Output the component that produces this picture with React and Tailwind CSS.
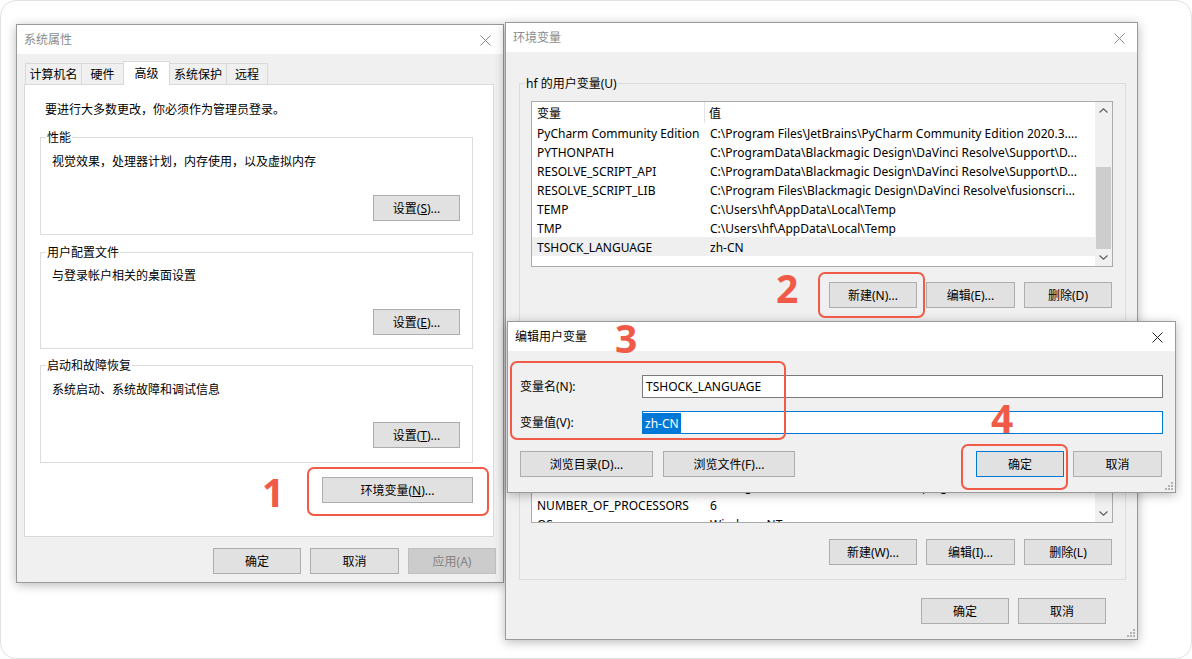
import clsx from 'clsx';

const userRows = [
  ['PyCharm Community Edition', 'C:\\Program Files\\JetBrains\\PyCharm Community Edition 2020.3....'],
  ['PYTHONPATH', 'C:\\ProgramData\\Blackmagic Design\\DaVinci Resolve\\Support\\D...'],
  ['RESOLVE_SCRIPT_API', 'C:\\ProgramData\\Blackmagic Design\\DaVinci Resolve\\Support\\D...'],
  ['RESOLVE_SCRIPT_LIB', 'C:\\Program Files\\Blackmagic Design\\DaVinci Resolve\\fusionscri...'],
  ['TEMP', 'C:\\Users\\hf\\AppData\\Local\\Temp'],
  ['TMP', 'C:\\Users\\hf\\AppData\\Local\\Temp'],
  ['TSHOCK_LANGUAGE', 'zh-CN'],
];

const sysRows = [
  ['ComSpec', 'C:\\Windows\\system32\\cmd.exe'],
  ['DriverData', 'C:\\Windows\\System32\\Drivers\\DriverData'],
  ['JAVA_HOME', 'C:\\Program Files\\Java\\jdk1.8.0_271'],
  ['NVM_HOME', 'C:\\Users\\hf\\AppData\\Roaming\\nvm'],
  ['NVM_SYMLINK', 'C:\\Program Files\\nodejs'],
  ['MOZ_PLUGIN_PATH', 'C:\\Program Files (x86)\\Foxit Software\\plugins\\'],
  ['NUMBER_OF_PROCESSORS', '6'],
  ['OS', 'Windows_NT'],
  ['Path', 'C:\\Windows\\system32;C:\\Windows;C:\\Windows\\System32\\Wbem'],
];

const tabs = [
  { label: '计算机名', w: 'w-[57px]' },
  { label: '硬件', w: 'w-[43px] -ml-px' },
  { label: '高级', w: 'w-[47px] -ml-px', active: true },
  { label: '系统保护', w: 'w-[58px] -ml-px' },
  { label: '远程', w: 'w-[42px] -ml-px' },
];

function Btn({ className, disabled, focus, children }) {
  return (
    <button
      type="button"
      className={clsx(
        'flex h-[26px] shrink-0 items-center justify-center border pt-px text-[12px] leading-none',
        disabled
          ? 'border-[#bfbfbf] bg-[#cccccc] text-[#838383]'
          : focus
            ? 'border-[#0078d7] bg-[#e1e1e1] text-black'
            : 'border-[#adadad] bg-[#e1e1e1] text-black',
        className
      )}
    >
      {children}
    </button>
  );
}

function CloseX({ dark }) {
  return (
    <svg width="11" height="11" viewBox="0 0 11 11" className="shrink-0">
      <path d="M0.5 0.5L10.5 10.5M10.5 0.5L0.5 10.5" stroke={dark ? '#222222' : '#8a8a8a'} strokeWidth="1" fill="none" />
    </svg>
  );
}

function Chevron({ up }) {
  return (
    <svg width="9" height="5" viewBox="0 0 9 5">
      <path d={up ? 'M0.5 4.5L4.5 0.8L8.5 4.5' : 'M0.5 0.5L4.5 4.2L8.5 0.5'} stroke="#606060" strokeWidth="1.2" fill="none" />
    </svg>
  );
}

function Grip({ className }) {
  const dots = [[6, 0], [6, 3], [3, 3], [6, 6], [3, 6], [0, 6]];
  return (
    <svg className={clsx('absolute', className)} width="8" height="8" viewBox="0 0 8 8">
      {dots.map(([x, y]) => (
        <rect key={x + '-' + y} x={x} y={y} width="2" height="2" fill="#b4b4b4" />
      ))}
    </svg>
  );
}

function Win({ className, title, active, children }) {
  return (
    <div
      className={clsx(
        'absolute flex flex-col border border-[#9a9a9a] bg-[#f0f0f0] shadow-[0_2px_10px_rgba(0,0,0,0.28)]',
        className
      )}
    >
      <div className="flex h-[29px] shrink-0 items-center justify-between bg-white pl-[7px] pr-[12px] pt-px">
        <span className={active ? 'text-black' : 'text-[#8c8c8c]'}>{title}</span>
        <CloseX dark={active} />
      </div>
      {children}
    </div>
  );
}

function Group({ label, labelBg, className, children }) {
  return (
    <div className={clsx('relative flex flex-col border border-[#dcdcdc]', className)}>
      <span className={clsx('absolute -top-[8px] left-[5px] px-[1px] leading-[16px]', labelBg)}>{label}</span>
      {children}
    </div>
  );
}

function ListView({ rows, selected, className, thumbClass }) {
  return (
    <div className={clsx('flex shrink-0 overflow-hidden border border-[#ababab] bg-white', className)}>
      <div className="flex min-w-0 flex-1 flex-col">
        <div className="flex h-[21px] shrink-0">
          <div className="flex w-[173px] items-center border-r border-[#e5e5e5] pl-[5px] pt-[2px]">变量</div>
          <div className="flex items-center pl-[4px] pt-[2px]">值</div>
        </div>
        {rows.map(([k, v], i) => (
          <div
            key={k}
            className={clsx(
              'flex h-[19px] shrink-0 items-center whitespace-nowrap pt-[2px]',
              i === selected && 'bg-[#efefef]'
            )}
          >
            <div className="w-[173px] shrink-0 overflow-hidden pl-[5px]">{k}</div>
            <div className="min-w-0 flex-1 overflow-hidden pl-[5px]">{v}</div>
          </div>
        ))}
      </div>
      <div className="flex w-[17px] shrink-0 flex-col bg-[#f0f0f0]">
        <div className="flex h-[17px] shrink-0 items-center justify-center">
          <Chevron up />
        </div>
        <div className="min-h-0 flex-1">
          <div className={clsx('mx-[1px] bg-[#cdcdcd]', thumbClass)} />
        </div>
        <div className="flex h-[17px] shrink-0 items-center justify-center">
          <Chevron />
        </div>
      </div>
    </div>
  );
}

function Num({ className, children }) {
  return (
    <span className={clsx('absolute text-[39px] font-bold leading-none text-[#f05a47]', className)}>{children}</span>
  );
}

function Mark({ className }) {
  return <div className={clsx('absolute rounded-[7px] border-2 border-[#f05a47]', className)} />;
}

export default function App() {
  return (
    <div className="relative h-[659px] w-[1192px] overflow-hidden bg-white text-[12px] leading-[16px] text-black [font-family:'Noto_Sans','Noto_Sans_CJK_SC',sans-serif]">
      <div className="absolute inset-0 rounded-[16px] border border-[#e2e2e2]" />

      {/* 系统属性 */}
      <Win title="系统属性" className="left-[16px] top-[24px] h-[559px] w-[488px]">
        <div className="flex flex-1 flex-col px-[7px] pt-[7px]">
          <div className="ml-[1px] flex h-[23px] items-end">
            {tabs.map((t) =>
              t.active ? (
                <div
                  key={t.label}
                  className={clsx(
                    'relative z-10 -mb-px flex h-[24px] items-center justify-center border border-b-0 border-[#d9d9d9] bg-white',
                    t.w
                  )}
                >
                  {t.label}
                </div>
              ) : (
                <div
                  key={t.label}
                  className={clsx(
                    'flex h-[21px] items-center justify-center border border-b-0 border-[#d9d9d9] bg-[#f0f0f0] pt-[2px]',
                    t.w
                  )}
                >
                  {t.label}
                </div>
              )
            )}
          </div>
          <div className="flex h-[453px] w-[470px] flex-col border border-[#d9d9d9] bg-white pl-[15px] pr-[20px] pt-[17px]">
            <p className="ml-[5px]">要进行大多数更改，你必须作为管理员登录。</p>
            <Group label="性能" labelBg="bg-white" className="mt-[19px] h-[98px]">
              <p className="pl-[11px] pt-[16px]">视觉效果，处理器计划，内存使用，以及虚拟内存</p>
              <Btn className="mb-[13px] mr-[12px] mt-auto w-[87px] self-end">
                设置(<u>S</u>)...
              </Btn>
            </Group>
            <Group label="用户配置文件" labelBg="bg-white" className="mt-[17px] h-[97px]">
              <p className="pl-[11px] pt-[15px]">与登录帐户相关的桌面设置</p>
              <Btn className="mb-[13px] mr-[12px] mt-auto w-[87px] self-end">
                设置(<u>E</u>)...
              </Btn>
            </Group>
            <Group label="启动和故障恢复" labelBg="bg-white" className="mt-[16px] h-[98px]">
              <p className="pl-[11px] pt-[16px]">系统启动、系统故障和调试信息</p>
              <Btn className="mb-[14px] mr-[12px] mt-auto w-[87px] self-end">
                设置(<u>T</u>)...
              </Btn>
            </Group>
            <Btn className="mt-[14px] w-[151px] self-end">
              环境变量(<u>N</u>)...
            </Btn>
          </div>
          <div className="mt-[11px] flex justify-end gap-[9px]">
            <Btn className="w-[88px]">确定</Btn>
            <Btn className="w-[89px]">取消</Btn>
            <Btn disabled className="w-[88px]">
              应用(A)
            </Btn>
          </div>
        </div>
      </Win>

      {/* 环境变量 */}
      <Win title="环境变量" className="left-[505px] top-[22px] h-[618px] w-[633px]">
        <div className="flex flex-1 flex-col pl-[13px] pr-[11px] pt-[31px]">
          <Group label="hf 的用户变量(U)" labelBg="bg-[#f0f0f0]" className="pb-[13px] pl-[11px] pr-[12px] pt-[17px]">
            <ListView rows={userRows} selected={6} className="h-[166px]" thumbClass="mt-[48px] h-[82px]" />
            <div className="mt-[15px] flex justify-end gap-[9px] pr-[1px]">
              <Btn className="w-[88px]">新建(N)...</Btn>
              <Btn className="w-[89px]">编辑(E)...</Btn>
              <Btn className="w-[88px]">删除(D)</Btn>
            </div>
          </Group>
          <Group label="系统变量(S)" labelBg="bg-[#f0f0f0]" className="mt-[19px] pb-[14px] pl-[11px] pr-[12px] pt-[17px]">
            <ListView rows={sysRows} className="h-[164px]" thumbClass="mt-[12px] h-[60px]" />
            <div className="mt-[16px] flex justify-end gap-[9px] pr-[1px]">
              <Btn className="w-[88px]">新建(W)...</Btn>
              <Btn className="w-[89px]">编辑(I)...</Btn>
              <Btn className="w-[88px]">删除(L)</Btn>
            </div>
          </Group>
          <div className="mt-[18px] flex justify-end gap-[9px] pr-[20px]">
            <Btn className="w-[88px]">确定</Btn>
            <Btn className="w-[88px]">取消</Btn>
          </div>
        </div>
        <Grip className="bottom-[2px] right-[2px]" />
      </Win>

      {/* 编辑用户变量 */}
      <Win title="编辑用户变量" active className="left-[507px] top-[321px] h-[172px] w-[669px]">
        <div className="flex flex-1 flex-col px-[12px] pt-[24px]">
          <div className="flex items-center">
            <span className="w-[122px] shrink-0 pt-px">变量名(N):</span>
            <div className="flex h-[23px] flex-1 items-center border border-[#7a7a7a] bg-white pl-[3px] pt-px">
              TSHOCK_LANGUAGE
            </div>
          </div>
          <div className="mt-[13px] flex items-center">
            <span className="w-[122px] shrink-0 pt-px">变量值(V):</span>
            <div className="flex h-[23px] flex-1 items-center border border-[#0078d7] bg-white">
              <span className="bg-[#0078d7] px-[2px] pt-px leading-[19px] text-white">zh-CN</span>
            </div>
          </div>
          <div className="mt-[17px] flex">
            <Btn className="w-[133px]">浏览目录(D)...</Btn>
            <Btn className="ml-[10px] w-[132px]">浏览文件(F)...</Btn>
            <Btn focus className="ml-auto w-[88px]">
              确定
            </Btn>
            <Btn className="ml-[9px] mr-[1px] w-[89px]">取消</Btn>
          </div>
        </div>
        <Grip className="bottom-[2px] right-[2px]" />
      </Win>

      {/* annotations */}
      <Mark className="left-[307px] top-[467px] h-[49px] w-[182px]" />
      <Num className="left-[262px] top-[472px]">1</Num>
      <Mark className="left-[818px] top-[272px] h-[46px] w-[107px]" />
      <Num className="left-[776px] top-[268px]">2</Num>
      <Mark className="left-[510px] top-[361px] h-[79px] w-[276px]" />
      <Num className="left-[615px] top-[318px]">3</Num>
      <Mark className="left-[961px] top-[444px] h-[46px] w-[107px]" />
      <Num className="left-[991px] top-[398px]">4</Num>
    </div>
  );
}
